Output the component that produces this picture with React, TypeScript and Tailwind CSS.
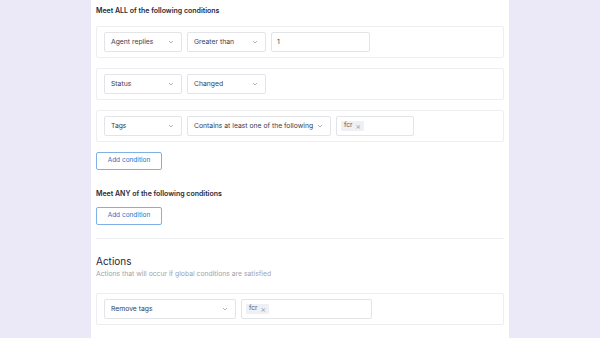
import React from "react";

function Chevron() {
  return (
    <svg width="6" height="4" viewBox="0 0 6 4" className="shrink-0">
      <path d="M1 1l2 2 2-2" fill="none" stroke="#9ca3af" strokeWidth="0.8" />
    </svg>
  );
}

function Select({ label, w }: { label: string; w: string }) {
  return (
    <div className={`${w} h-[20px] flex items-center justify-between pl-[6px] pr-[7px] border border-[#e2e4e8] rounded-[2px] bg-white`}>
      <span className="text-[6.8px] text-[#374151] whitespace-nowrap">{label}</span>
      <Chevron />
    </div>
  );
}

function TagInput({ w }: { w: string }) {
  return (
    <div className={`${w} h-[20px] flex items-center px-[4px] border border-[#e2e4e8] rounded-[2px] bg-white`}>
      <span className="flex items-center gap-[3px] bg-[#eef0f3] rounded-[1px] px-[3px] h-[10px] text-[6.5px] text-[#4b5563]">
        fcr <span className="text-[#9ca3af] text-[8px] leading-none">×</span>
      </span>
    </div>
  );
}

function Card({ children }: { children: React.ReactNode }) {
  return (
    <div className="border border-[#eceef1] rounded-[2px] px-[7px] py-[5px] flex items-center gap-[5px]">
      {children}
    </div>
  );
}

function AddButton() {
  return (
    <button className="block w-[66px] h-[18px] border border-[#7fb0e8] rounded-[2px] text-[6.5px] text-[#2f6fc4] bg-white">
      Add condition
    </button>
  );
}

export default function App() {
  return (
    <div className="w-[600px] h-[338px] overflow-hidden bg-[#ebe8f8] flex" style={{ fontFamily: "Inter, 'Noto Sans', sans-serif" }}>
      <div className="ml-[91px] w-[418px] h-full bg-white px-[5px] pt-[5px]">
        <h3 className="text-[7px] font-semibold text-[#1f2937] leading-[11px]">Meet ALL of the following conditions</h3>

        <div className="mt-[10px] flex flex-col gap-[10px]">
          <Card>
            <Select label="Agent replies" w="w-[78px]" />
            <Select label="Greater than" w="w-[79px]" />
            <div className="w-[99px] h-[20px] flex items-center px-[5px] border border-[#e2e4e8] rounded-[2px] text-[6.8px] text-[#374151]">1</div>
          </Card>
          <Card>
            <Select label="Status" w="w-[78px]" />
            <Select label="Changed" w="w-[79px]" />
          </Card>
          <Card>
            <Select label="Tags" w="w-[78px]" />
            <Select label="Contains at least one of the following" w="w-[144px]" />
            <TagInput w="w-[78px]" />
          </Card>
        </div>

        <div className="mt-[10px]">
          <AddButton />
        </div>

        <h3 className="mt-[18px] text-[7px] font-semibold text-[#1f2937] leading-[11px]">Meet ANY of the following conditions</h3>
        <div className="mt-[8px]">
          <AddButton />
        </div>

        <div className="mt-[13px] border-t border-[#eceef1]" />

        <h2 className="mt-[15px] text-[10px] text-[#1f2937] leading-[14px]">Actions</h2>
        <p className="mt-[1px] text-[6.8px] text-[#9ca3af] leading-[10px]">Actions that will occur if global conditions are satisfied</p>

        <div className="mt-[14px]">
          <Card>
            <Select label="Remove tags" w="w-[132px]" />
            <TagInput w="w-[131px]" />
          </Card>
        </div>
      </div>
    </div>
  );
}
